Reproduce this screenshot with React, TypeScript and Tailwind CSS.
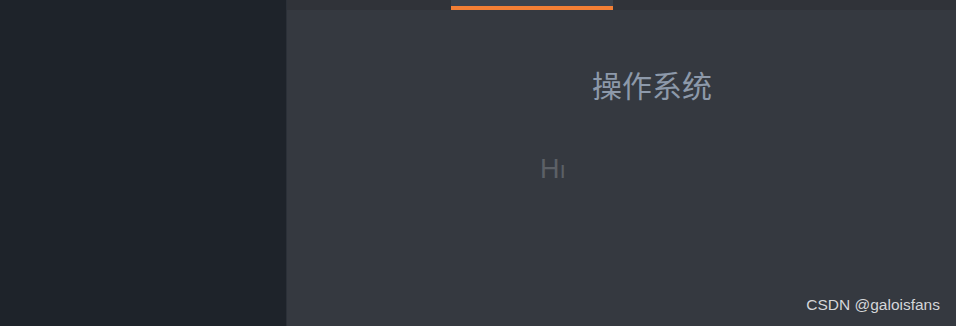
export default function App() {
  return (
    <div className="flex h-[326px] w-[956px] overflow-hidden bg-[#353940]" style={{ fontFamily: '"Noto Sans", "Noto Sans CJK SC", sans-serif' }}>
      <aside className="h-full w-[287px] shrink-0 border-r border-[#2b3038] bg-[#1e232a]" />
      <main className="relative flex min-w-0 flex-1 flex-col">
        <div className="flex h-[10px] bg-[#303339] pl-[164px]">
          <div className="flex w-[162px] flex-col">
            <div className="h-[6px] bg-[#3b434d]" />
            <div className="h-[4px] bg-[#f27f35]" />
          </div>
        </div>
        <h1 className="mt-[56px] pl-[305px] text-[30px] leading-[40px] text-[#8d99aa]">操作系统</h1>
        <div className="mt-[46px] pl-[253px] text-[27px] leading-[34px] text-[#5c6066]" style={{ fontFamily: '"Liberation Sans", sans-serif' }}>
          H<span className="text-[23px]">ı</span>
        </div>
        <div className="absolute bottom-[10px] right-[16px] text-[15.5px] text-[#d4d6d9]" style={{ fontFamily: '"Liberation Sans", sans-serif' }}>
          CSDN @galoisfans
        </div>
      </main>
    </div>
  );
}
